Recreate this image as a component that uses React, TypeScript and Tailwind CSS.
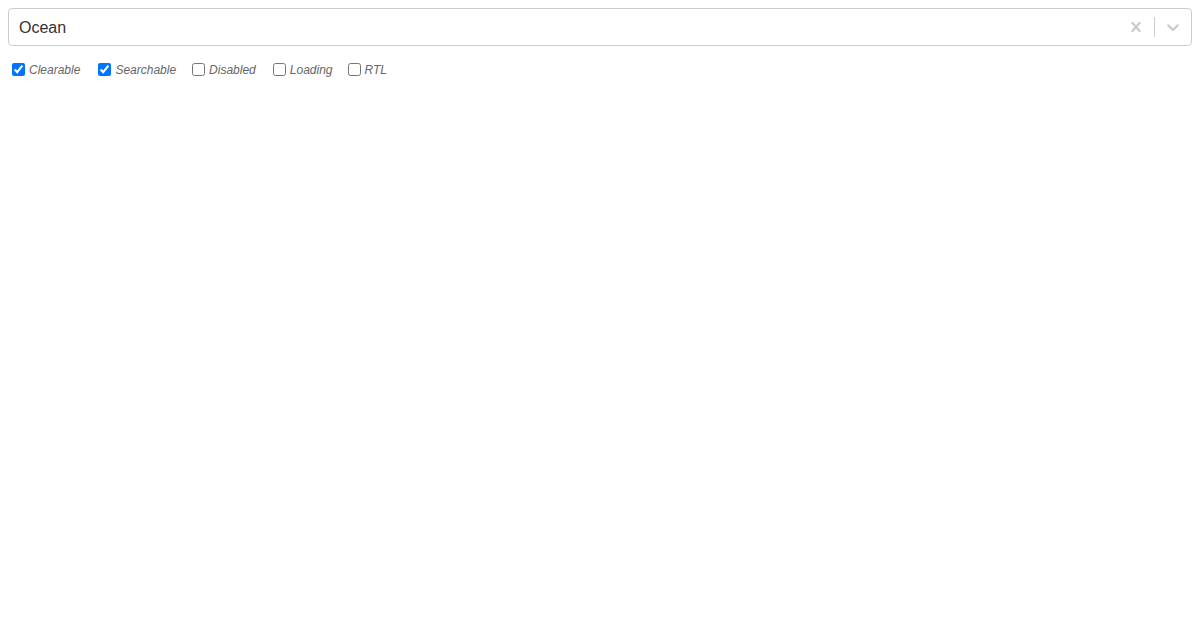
import React from "react";

const Check = ({ label, checked, gap }: { label: string; checked?: boolean; gap: string }) => (
  <label className={`flex items-center text-[12px] italic text-[#666] ${gap}`}>
    <input type="checkbox" defaultChecked={checked} className="w-[13px] h-[13px] ml-[4px] mr-[4px] my-[3px]" />
    <span>{label}</span>
  </label>
);

export default function App() {
  return (
    <div className="p-2 bg-white min-h-[630px]" style={{ fontFamily: '"Liberation Sans", Arial, sans-serif' }}>
      <div className="flex items-center min-h-[38px] border border-[#cccccc] rounded-[4px] bg-white">
        <div className="flex-1 px-[8px] pt-[3px] pb-[1px]">
          <div className="mx-[2px] text-[16px] text-[#333333]">Ocean</div>
        </div>
        <div className="flex items-center self-stretch">
          <div className="p-[8px] text-[#cccccc]">
            <svg width="20" height="20" viewBox="0 0 20 20" fill="currentColor">
              <path d="M14.348 14.849c-0.469 0.469-1.229 0.469-1.697 0l-2.651-3.030-2.651 3.029c-0.469 0.469-1.229 0.469-1.697 0-0.469-0.469-0.469-1.229 0-1.697l2.758-3.15-2.759-3.152c-0.469-0.469-0.469-1.228 0-1.697s1.228-0.469 1.697 0l2.652 3.031 2.651-3.031c0.469-0.469 1.228-0.469 1.697 0s0.469 1.229 0 1.697l-2.758 3.152 2.758 3.15c0.469 0.469 0.469 1.229 0 1.698z" />
            </svg>
          </div>
          <span className="w-px self-stretch my-[8px] bg-[#cccccc]" />
          <div className="p-[8px] text-[#cccccc]">
            <svg width="20" height="20" viewBox="0 0 20 20" fill="currentColor">
              <path d="M4.516 7.548c0.436-0.446 1.043-0.481 1.576 0l3.908 3.747 3.908-3.747c0.533-0.481 1.141-0.446 1.574 0 0.436 0.445 0.408 1.197 0 1.615-0.406 0.418-4.695 4.502-4.695 4.502-0.217 0.223-0.502 0.335-0.787 0.335s-0.57-0.112-0.789-0.335c0 0-4.287-4.084-4.695-4.502s-0.436-1.17 0-1.615z" />
            </svg>
          </div>
        </div>
      </div>
      <div className="flex items-center mt-[14px]">
        <Check label="Clearable" checked gap="mr-[14px]" />
        <Check label="Searchable" checked gap="mr-[12px]" />
        <Check label="Disabled" gap="mr-[13px]" />
        <Check label="Loading" gap="mr-[11px]" />
        <Check label="RTL" gap="mr-[12px]" />
      </div>
    </div>
  );
}
